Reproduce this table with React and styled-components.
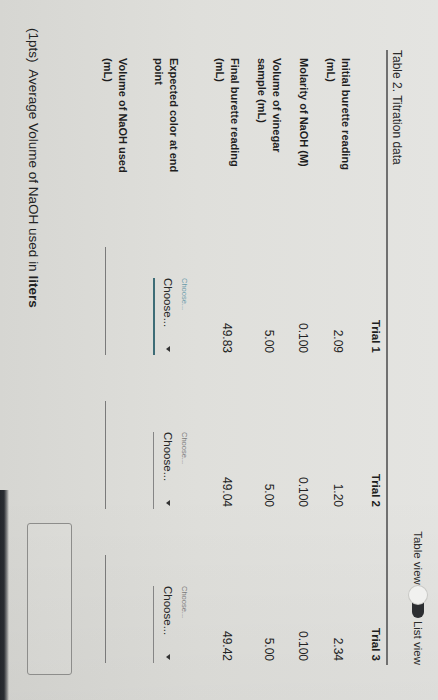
import React from "react";
import styled, { createGlobalStyle } from "styled-components";

const GlobalStyle = createGlobalStyle`
  html, body {
    margin: 0;
    padding: 0;
    background: #dddcd8;
  }
  body {
    font-family: "Liberation Sans", Arial, sans-serif;
    color: #222;
  }
`;

const rows = [
  { label: "Initial burette reading (mL)", values: ["2.09", "1.20", "2.34"] },
  { label: "Molarity of NaOH (M)", values: ["0.100", "0.100", "0.100"] },
  { label: "Volume of vinegar sample (mL)", values: ["5.00", "5.00", "5.00"] },
  { label: "Final burette reading (mL)", values: ["49.83", "49.04", "49.42"] },
];

function ChooseSelect({ active }) {
  return (
    <SelectBox $active={active}>
      <SelectHint $active={active}>Choose...</SelectHint>
      <SelectValue>
        Choose...
        <Caret />
      </SelectValue>
    </SelectBox>
  );
}

function App() {
  return (
    <>
      <GlobalStyle />
      <Stage>
        <Page>
          <ViewBar>
            <span>Table view</span>
            <Switch>
              <Knob />
            </Switch>
            <span>List view</span>
          </ViewBar>
          <Caption>Table 2. Titration data</Caption>
          <Table>
            <LabelCell />
            <HeadCell>Trial 1</HeadCell>
            <HeadCell>Trial 2</HeadCell>
            <HeadCell>Trial 3</HeadCell>

            {rows.map((row) => (
              <React.Fragment key={row.label}>
                <LabelCell>
                  <LabelText>{row.label}</LabelText>
                </LabelCell>
                {row.values.map((v, i) => (
                  <ValueCell key={i}>{v}</ValueCell>
                ))}
              </React.Fragment>
            ))}

            <LabelCell $kind="select">
              <LabelText>Expected color at end point</LabelText>
            </LabelCell>
            {[true, false, false].map((active, i) => (
              <ValueCell key={i} $kind="select">
                <ChooseSelect active={active} />
              </ValueCell>
            ))}

            <LabelCell>
              <LabelText>Volume of NaOH used (mL)</LabelText>
            </LabelCell>
            {[0, 1, 2].map((i) => (
              <ValueCell key={i} $kind="input">
                <LineInput />
              </ValueCell>
            ))}
          </Table>

          <QuestionRow>
            <Question>
              (1pts)&nbsp; Average Volume of NaOH used in <strong>liters</strong>
            </Question>
            <AnswerBox />
          </QuestionRow>
        </Page>
      </Stage>
    </>
  );
}

export default App;

const Stage = styled.div`
  width: 438px;
  height: 700px;
  overflow: hidden;
`;

/* the photo shows the page turned a quarter turn clockwise */
const Page = styled.div`
  width: 700px;
  height: 438px;
  box-sizing: border-box;
  padding-left: 50px;
  display: flex;
  flex-direction: column;
  transform-origin: 0 0;
  transform: translateX(438px) rotate(90deg);
  background:
    linear-gradient(to top, #24272c 0, #2a2d32 4px, rgba(60, 62, 66, 0.5) 7px, transparent 9px)
      right bottom / 210px 10px no-repeat,
    linear-gradient(to right, rgba(0, 0, 0, 0) 70%, rgba(0, 0, 0, 0.03)),
    linear-gradient(to bottom, #e4e4e1 0%, #dfdfdb 55%, #d6d6d2 100%);
`;

const ViewBar = styled.div`
  width: 615px;
  padding-top: 12px;
  display: flex;
  justify-content: flex-end;
  align-items: center;
  gap: 3px;
  font-size: 11.5px;
  line-height: 16px;
  color: #2a2a2a;
`;

const Switch = styled.div`
  position: relative;
  width: 30px;
  height: 12px;
  border-radius: 6px;
  background: #2c2e31;
`;

const Knob = styled.div`
  position: absolute;
  left: -2px;
  top: -3px;
  width: 18px;
  height: 18px;
  border-radius: 50%;
  background: #f1f1ef;
  box-shadow: 0 0 0 1px #c9c9c6;
`;

const Caption = styled.div`
  margin-top: 5px;
  font-size: 12px;
  line-height: 16px;
  color: #2a2a2a;
`;

const Table = styled.div`
  margin-top: 1px;
  width: 615px;
  display: grid;
  grid-template-columns: 153px repeat(3, 154px);
  border-top: 2px solid #707070;
`;

const HeadCell = styled.div`
  padding: 2px 4px 9px;
  text-align: right;
  font-size: 11.5px;
  font-weight: 700;
  line-height: 16px;
  color: #1e1e1e;
`;

const LabelCell = styled.div`
  padding: ${(p) => (p.$kind === "select" ? "25px 8px 15px" : "6px 8px")};
`;

const LabelText = styled.div`
  max-width: 125px;
  font-size: 11px;
  font-weight: 700;
  line-height: 15px;
  color: #1e1e1e;
`;

const ValueCell = styled.div`
  display: flex;
  justify-content: flex-end;
  align-items: center;
  align-self: ${(p) => (p.$kind ? "start" : "center")};
  margin-top: ${(p) => (p.$kind === "select" ? "16px" : p.$kind === "input" ? "4px" : "0")};
  padding-right: ${(p) => (p.$kind ? "2px" : "4px")};
  font-size: 12px;
  line-height: 16px;
  color: #222;
`;

const SelectBox = styled.div`
  width: 77px;
  border-bottom: ${(p) => (p.$active ? "2px solid #3d6c76" : "1px solid #858585")};
  padding-bottom: ${(p) => (p.$active ? "5px" : "6px")};
`;

const SelectHint = styled.div`
  font-size: 7.5px;
  line-height: 11px;
  margin-bottom: 3px;
  color: ${(p) => (p.$active ? "#6c9dab" : "#7d7d7d")};
`;

const SelectValue = styled.div`
  display: flex;
  justify-content: space-between;
  align-items: center;
  font-size: 11.5px;
  line-height: 16px;
  color: #262626;
`;

const Caret = styled.span`
  width: 0;
  height: 0;
  margin-right: 3px;
  border-left: 3px solid transparent;
  border-right: 3px solid transparent;
  border-top: 4px solid #333;
`;

const LineInput = styled.div`
  width: 108px;
  height: 26px;
  border-bottom: 1px solid #7a7a7a;
`;

const QuestionRow = styled.div`
  margin-top: 22px;
  margin-left: -22px;
  width: 647px;
  display: flex;
  justify-content: space-between;
  align-items: flex-end;
`;

const Question = styled.div`
  margin-bottom: -2px;
  font-size: 13.5px;
  line-height: 16px;
  color: #222;
  strong {
    font-weight: 700;
  }
`;

const AnswerBox = styled.div`
  width: 150px;
  height: 43px;
  border: 1px solid #8d8d8b;
  border-radius: 3px;
  background: rgba(255, 255, 255, 0.08);
`;
